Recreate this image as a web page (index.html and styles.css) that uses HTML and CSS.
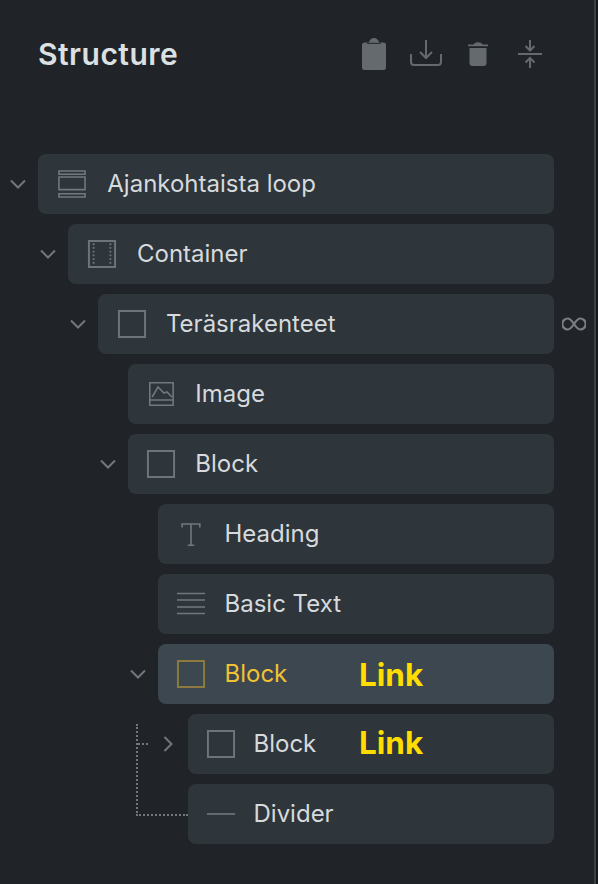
FILE: index.html
```html
<!DOCTYPE html>
<html lang="en">
<head>
<meta charset="utf-8">
<title>Structure</title>
<link rel="stylesheet" href="styles.css">
</head>
<body>
<main class="panel">
  <header class="head">
    <h1 class="title">Structure</h1>
    <div class="actions">
      <svg class="act act-clip" viewBox="0 0 24 32"><path d="M2.500 4.500H6.800C7.800 1.500 9.500 0 12 0s4.200 1.500 5.200 4.500h4.300A2.500 2.500 0 0 1 24 7v22.500a2.500 2.500 0 0 1-2.500 2.500h-19A2.500 2.500 0 0 1 0 29.500V7a2.500 2.500 0 0 1 2.500-2.500z"/><path class="cut" d="M5 5.300h14"/></svg>
      <svg class="act act-down" viewBox="0 0 32 26"><path class="ln" d="M16 0v17.500M10 12l6 6 6-6M1 14v8a3 3 0 0 0 3 3h24a3 3 0 0 0 3-3v-8"/></svg>
      <svg class="act act-trash" viewBox="0 0 20 24"><path d="M1.500 6h17v15a3 3 0 0 1-3 3h-11a3 3 0 0 1-3-3z"/><path d="M0 2.500h5.500C6.500 1 8 .3 10 .3s3.500.7 4.500 2.200H20V4.300H0z"/></svg>
      <svg class="act act-comp" viewBox="0 0 24 28"><path class="ln" d="M0 14h24M12 0v10M7.500 6l4.500 4.500L16.500 6M12 28V18M7.500 22.500L12 18l4.500 4.500"/></svg>
    </div>
  </header>

  <ul class="tree">
    <li class="node d0">
      <svg class="chev" viewBox="0 0 16 10"><path d="M1 1.500l7 7 7-7"/></svg>
      <div class="row">
        <svg class="ico bars" viewBox="0 0 30 30"><path d="M1 1h28v3.500H1zM1 7.500h28V21H1zM1 25.500h28V29H1z"/></svg>
        <span class="label">Ajankohtaista loop</span>
      </div>
    </li>
    <li class="node d1">
      <svg class="chev" viewBox="0 0 16 10"><path d="M1 1.500l7 7 7-7"/></svg>
      <div class="row">
        <svg class="ico" viewBox="0 0 30 30"><path d="M1 1h28v28H1z"/><path class="dots" d="M6 3.500v23.500M24 3.500v23.500"/></svg>
        <span class="label">Container</span>
      </div>
    </li>
    <li class="node d2">
      <svg class="chev" viewBox="0 0 16 10"><path d="M1 1.500l7 7 7-7"/></svg>
      <div class="row">
        <svg class="ico" viewBox="0 0 30 30"><path d="M1 1h28v28H1z"/></svg>
        <span class="label">Teräsrakenteet</span>
      </div>
      <svg class="infinity" viewBox="0 0 24 14"><path d="M12 7C9.500 3.300 8 1.500 5.800 1.500a5.500 5.500 0 0 0 0 11C8 12.500 9.500 10.700 12 7s4-5.500 6.200-5.500a5.500 5.500 0 0 1 0 11C16 12.500 14.500 10.700 12 7z"/></svg>
    </li>
    <li class="node d3">
      <span class="nochev"></span>
      <div class="row">
        <svg class="ico thin" viewBox="0 0 30 30"><path d="M3 3h25v24H3zM3 21.500h25M5.500 18.200L11.800 7.500l6.400 6.500 3.200-1.200 5.300 5.400"/></svg>
        <span class="label">Image</span>
      </div>
    </li>
    <li class="node d3">
      <svg class="chev" viewBox="0 0 16 10"><path d="M1 1.500l7 7 7-7"/></svg>
      <div class="row">
        <svg class="ico" viewBox="0 0 30 30"><path d="M1 1h28v28H1z"/></svg>
        <span class="label">Block</span>
      </div>
    </li>
    <li class="node d4">
      <span class="nochev"></span>
      <div class="row">
        <svg class="ico thin" viewBox="0 0 30 30"><path d="M5.500 8V4.200h19V8M15 4.200V27M11.500 27h7"/></svg>
        <span class="label">Heading</span>
      </div>
    </li>
    <li class="node d4">
      <span class="nochev"></span>
      <div class="row">
        <svg class="ico thin" viewBox="0 0 30 30"><path d="M0 3.800h30M0 10.700h30M0 18.200h30M0 25.200h30"/></svg>
        <span class="label">Basic Text</span>
      </div>
    </li>
    <li class="node d4">
      <svg class="chev" viewBox="0 0 16 10"><path d="M1 1.500l7 7 7-7"/></svg>
      <div class="row active">
        <svg class="ico" viewBox="0 0 30 30"><path d="M1 1h28v28H1z"/></svg>
        <span class="label">Block</span>
        <span class="tag tag-low">Link</span>
      </div>
    </li>
    <li class="node d5">
      <svg class="chev side" viewBox="0 0 10 16"><path d="M1.500 1l7 7-7 7"/></svg>
      <div class="row">
        <svg class="ico" viewBox="0 0 30 30"><path d="M1 1h28v28H1z"/></svg>
        <span class="label">Block</span>
        <span class="tag">Link</span>
      </div>
    </li>
    <li class="node d5">
      <span class="nochev"></span>
      <div class="row">
        <svg class="ico thin" viewBox="0 0 30 30"><path d="M0 15h30"/></svg>
        <span class="label">Divider</span>
      </div>
    </li>
    <li class="guide" aria-hidden="true">
      <span class="guide-main"></span>
      <span class="guide-tick"></span>
    </li>
  </ul>
</main>
</body>
</html>
```
FILE: styles.css
```css
* { box-sizing: border-box; }
html, body { margin: 0; padding: 0; }
body { background: #15181b; font-family: Inter, "Liberation Sans", sans-serif; overflow: hidden; }
.panel { width: 596px; height: 884px; padding: 0 40px 0 0; background: #202428; border-right: 2px solid #3a4248; }
.head { height: 154px; padding: 36px 12px 0 38px; display: flex; align-items: flex-start; justify-content: space-between; }
.title { margin: 0; font-size: 30px; line-height: 36px; font-weight: 600; letter-spacing: .5px; color: #dce0e3; }
.actions { display: flex; align-items: flex-start; }
.act { display: block; flex: none; overflow: visible; }
.act path { fill: #646a6e; }
.act .ln { fill: none; stroke: #646a6e; stroke-width: 2; }
.act .cut { fill: none; stroke: #202428; stroke-width: 1; }
.act-clip { width: 24px; height: 32px; margin: 2px 0 0 0; }
.act-down { width: 32px; height: 26px; margin: 4px 0 0 24px; }
.act-trash { width: 20px; height: 24px; margin: 6px 0 0 26px; }
.act-comp { width: 24px; height: 28px; margin: 4px 0 0 30px; }
.tree { list-style: none; margin: 0; padding: 0; position: relative; display: flex; flex-direction: column; gap: 10px; }
.node { display: flex; align-items: center; position: relative; }
.d0 { padding-left: 0; }
.d1 { padding-left: 30px; }
.d2 { padding-left: 60px; }
.d3 { padding-left: 90px; }
.d4 { padding-left: 120px; }
.d5 { padding-left: 150px; }
.d0 .row { padding-left: 20.3px; }
.d1 .row { padding-left: 20px; }
.d2 .row { padding-left: 19.7px; }
.d3 .row { padding-left: 19px; }
.d4 .row { padding-left: 19px; }
.d5 .row { padding-left: 19px; }
.d0 .label { margin-left: 21px; }
.d1 .label { margin-left: 21px; }
.d2 .label { margin-left: 20.3px; }
.d3 .label { margin-left: 20.3px; }
.d4 .label { margin-left: 19.500px; }
.d5 .label { margin-left: 18.500px; }
.chev, .nochev { flex: none; width: 38px; }
.chev { height: 10px; padding: 0 11px 0 9px; overflow: visible; }
.chev path { fill: none; stroke: #72777b; stroke-width: 2; }
.chev.side { height: 16px; padding: 0 15px 0 13px; }
.row { flex: 1; height: 60px; background: #2e353b; border-radius: 8px; display: flex; align-items: center; min-width: 0; }
.ico { width: 28px; height: 28px; flex: none; overflow: visible; }
.ico path { fill: none; stroke: #6f7478; stroke-width: 2.1; }
.ico.thin path, .ico.bars path { stroke: #73787c; stroke-width: 1.7; }
.ico .dots { stroke-width: 2; stroke-dasharray: 2 2; }
.label { font-size: 24px; line-height: 30px; color: #d6dadd; white-space: nowrap; }
.tag { position: absolute; left: 359px; top: 9px; font-size: 31.500px; line-height: 40px; font-weight: 700; color: #ffdd00; }
.tag-low { top: 11px; }
.active { background: #3d474f; }
.active .label { color: #f0c233; }
.active .ico path { stroke: #8d7a3e; }
.infinity { position: absolute; left: 562px; top: 23px; width: 24px; height: 14px; }
.infinity path { fill: none; stroke: #7a7f83; stroke-width: 2.2; }
.guide { position: absolute; left: 136px; top: 570px; width: 52px; height: 92px; }
.guide-main { position: absolute; inset: 0 0 0 0; border-left: 2px dotted #72777b; border-bottom: 2px dotted #72777b; }
.guide-tick { position: absolute; left: 2px; top: 19px; width: 10px; border-top: 2px dotted #72777b; }
```
